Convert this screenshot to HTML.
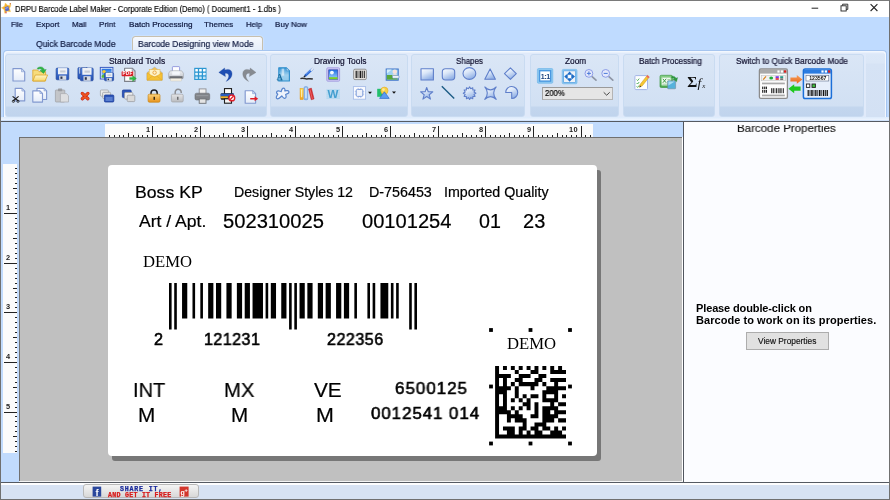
<!DOCTYPE html>
<html lang="en"><head><meta charset="utf-8"><title>DRPU Barcode Label Maker</title>
<style>
*{box-sizing:border-box;margin:0;padding:0}
html,body{width:890px;height:500px;overflow:hidden}
body{position:relative;background:#bfdbff;font-family:"Liberation Sans",sans-serif;color:#000}
.a{position:absolute}
.t{position:absolute;white-space:nowrap;display:block;transform-origin:0 0;will-change:transform}
#titlebar{left:0;top:0;width:890px;height:17px;background:#fff}
#bt{left:0;top:0;width:890px;height:1px;background:#7a7a7a}
#bl{left:0;top:0;width:1.1px;height:500px;background:#707070}
#br{left:888.8px;top:0;width:1.2px;height:500px;background:#707070}
#bb{left:0;top:498.7px;width:890px;height:1.3px;background:#707070}
#menubar{left:1px;top:17px;width:888px;height:34px;background:#bfdbff}
#tabact{left:132px;top:35.6px;width:131.4px;height:16px;background:linear-gradient(#f6f9fe,#e3ecf9);border:1px solid #c8c0ae;border-bottom:none;border-radius:3.5px 3.5px 0 0;box-shadow:0 0 1.5px rgba(255,255,255,.9)}
#ribbon{left:3px;top:50px;width:884px;height:70px;background:#e0eafa;border:1px solid #a6c5ef;border-radius:4px 4px 0 0;border-bottom:none;box-shadow:inset 0 0 0 1.5px #f2f7fe}
.grp{position:absolute;top:54px;height:63px;background:linear-gradient(#dae6f6 0,#d1e0f3 51px,#c3d6ee 52px,#c0d4ed 100%);border:1px solid #c9dbf1;border-radius:3px}
#rline{left:1px;top:121px;width:888px;height:1px;background:#555a62}
#rhi{left:1px;top:117px;width:888px;height:3px;background:linear-gradient(#dcebfc,#edf4fe)}
#rlo{left:1px;top:120px;width:888px;height:1px;background:#cfe2fb}
#work{left:1px;top:122px;width:682px;height:360px;background:#c1dbfd}
#canvas{left:19px;top:137px;width:663px;height:343.5px;background:#c0c0c0;border-top:1px solid #707070;border-left:1px solid #707070}
#hr{left:105px;top:124px;width:488px;height:13px;background:#fbfbfb}
#vr{left:3px;top:164px;width:14px;height:289px;background:#fbfbfb}
#shadow{left:112px;top:170px;width:489px;height:290.5px;background:#777;border-radius:3px}
#label{left:108px;top:165px;width:489px;height:291px;background:#fff;border-radius:4px}
#rpanel{left:683px;top:122px;width:206px;height:360px;background:#fbfcff;border-left:1.3px solid #50555e}
#rsep{left:682px;top:137px;width:1px;height:345px;background:#fff}
#sline{left:1px;top:483px;width:888px;height:2px;background:#fdfdfe}
#sline2{left:1px;top:481.9px;width:888px;height:1.3px;background:#555a62}
#cwl{left:19px;top:480.5px;width:664px;height:1.5px;background:#f4f4f4}
#status{left:1px;top:485px;width:888px;height:14px;background:#d7e2f3}
#vbtn{left:746px;top:332px;width:83px;height:18px;background:#e1e1e1;border:1px solid #adadad}
#share{left:83px;top:484px;width:116px;height:14px;background:linear-gradient(#f4f4f4,#d8d8d8);border:1px solid #b8b8b8;border-radius:3px}
#zsel{left:542px;top:87px;width:71px;height:13px;background:#e5e5e5;border:1px solid #b4b4b4;border-top-color:#9a9a9a;border-left-color:#a4a4a4}

#rfill{left:866px;top:54px;width:19px;height:63px;background:linear-gradient(#dce8f8 0,#dbe7f7 9px,#d6e3f5 10px,#d3e1f4 100%)}

</style></head>
<body>
<div class="a" id="titlebar"></div>
<div class="a" id="menubar"></div>
<div class="a" id="tabact"></div>
<div class="a" id="ribbon"></div>
<div class="grp" style="left:5px;width:262px"></div>
<div class="grp" style="left:270px;width:138px"></div>
<div class="grp" style="left:411px;width:114px"></div>
<div class="grp" style="left:530px;width:89px"></div>
<div class="grp" style="left:623px;width:92px"></div>
<div class="grp" style="left:719px;width:145px"></div>
<div class="a" id="rfill"></div>
<div class="a" id="zsel"></div>
<div class="a" id="rhi"></div>
<div class="a" id="rlo"></div>
<div class="a" id="rline"></div>
<div class="a" id="work"></div>
<div class="a" id="hr"></div>
<div class="a" id="vr"></div>
<div class="a" id="canvas"></div>
<div class="a" id="shadow"></div>
<div class="a" id="label"></div>
<div class="a" id="rsep"></div>
<div class="a" id="rpanel"></div>
<div class="a" id="vbtn"></div>
<div class="a" id="cwl"></div>
<div class="a" id="sline"></div>
<div class="a" id="sline2"></div>
<div class="a" id="status"></div>
<div class="a" id="share"></div>
<div class="a" id="bt"></div>
<div class="a" id="bl"></div>
<div class="a" id="br"></div>
<div class="a" id="bb"></div>

<svg class="a" style="left:0;top:0" width="890" height="500" viewBox="0 0 890 500">
<g stroke="#222" stroke-width="1" shape-rendering="crispEdges">
<line x1="109.64" y1="134.5" x2="109.64" y2="137" stroke-width="1"/>
<line x1="114.40" y1="134.5" x2="114.40" y2="137" stroke-width="1"/>
<line x1="119.17" y1="134.5" x2="119.17" y2="137" stroke-width="1"/>
<line x1="123.93" y1="134.5" x2="123.93" y2="137" stroke-width="1"/>
<line x1="128.69" y1="133" x2="128.69" y2="137" stroke-width="1"/>
<line x1="133.45" y1="134.5" x2="133.45" y2="137" stroke-width="1"/>
<line x1="138.21" y1="134.5" x2="138.21" y2="137" stroke-width="1"/>
<line x1="142.98" y1="134.5" x2="142.98" y2="137" stroke-width="1"/>
<line x1="147.74" y1="134.5" x2="147.74" y2="137" stroke-width="1"/>
<line x1="152.50" y1="126" x2="152.50" y2="137" stroke-width="1"/>
<line x1="157.26" y1="134.5" x2="157.26" y2="137" stroke-width="1"/>
<line x1="162.02" y1="134.5" x2="162.02" y2="137" stroke-width="1"/>
<line x1="166.79" y1="134.5" x2="166.79" y2="137" stroke-width="1"/>
<line x1="171.55" y1="134.5" x2="171.55" y2="137" stroke-width="1"/>
<line x1="176.31" y1="133" x2="176.31" y2="137" stroke-width="1"/>
<line x1="181.07" y1="134.5" x2="181.07" y2="137" stroke-width="1"/>
<line x1="185.83" y1="134.5" x2="185.83" y2="137" stroke-width="1"/>
<line x1="190.60" y1="134.5" x2="190.60" y2="137" stroke-width="1"/>
<line x1="195.36" y1="134.5" x2="195.36" y2="137" stroke-width="1"/>
<line x1="200.12" y1="126" x2="200.12" y2="137" stroke-width="1"/>
<line x1="204.88" y1="134.5" x2="204.88" y2="137" stroke-width="1"/>
<line x1="209.64" y1="134.5" x2="209.64" y2="137" stroke-width="1"/>
<line x1="214.41" y1="134.5" x2="214.41" y2="137" stroke-width="1"/>
<line x1="219.17" y1="134.5" x2="219.17" y2="137" stroke-width="1"/>
<line x1="223.93" y1="133" x2="223.93" y2="137" stroke-width="1"/>
<line x1="228.69" y1="134.5" x2="228.69" y2="137" stroke-width="1"/>
<line x1="233.45" y1="134.5" x2="233.45" y2="137" stroke-width="1"/>
<line x1="238.22" y1="134.5" x2="238.22" y2="137" stroke-width="1"/>
<line x1="242.98" y1="134.5" x2="242.98" y2="137" stroke-width="1"/>
<line x1="247.74" y1="126" x2="247.74" y2="137" stroke-width="1"/>
<line x1="252.50" y1="134.5" x2="252.50" y2="137" stroke-width="1"/>
<line x1="257.26" y1="134.5" x2="257.26" y2="137" stroke-width="1"/>
<line x1="262.03" y1="134.5" x2="262.03" y2="137" stroke-width="1"/>
<line x1="266.79" y1="134.5" x2="266.79" y2="137" stroke-width="1"/>
<line x1="271.55" y1="133" x2="271.55" y2="137" stroke-width="1"/>
<line x1="276.31" y1="134.5" x2="276.31" y2="137" stroke-width="1"/>
<line x1="281.07" y1="134.5" x2="281.07" y2="137" stroke-width="1"/>
<line x1="285.84" y1="134.5" x2="285.84" y2="137" stroke-width="1"/>
<line x1="290.60" y1="134.5" x2="290.60" y2="137" stroke-width="1"/>
<line x1="295.36" y1="126" x2="295.36" y2="137" stroke-width="1"/>
<line x1="300.12" y1="134.5" x2="300.12" y2="137" stroke-width="1"/>
<line x1="304.88" y1="134.5" x2="304.88" y2="137" stroke-width="1"/>
<line x1="309.65" y1="134.5" x2="309.65" y2="137" stroke-width="1"/>
<line x1="314.41" y1="134.5" x2="314.41" y2="137" stroke-width="1"/>
<line x1="319.17" y1="133" x2="319.17" y2="137" stroke-width="1"/>
<line x1="323.93" y1="134.5" x2="323.93" y2="137" stroke-width="1"/>
<line x1="328.69" y1="134.5" x2="328.69" y2="137" stroke-width="1"/>
<line x1="333.46" y1="134.5" x2="333.46" y2="137" stroke-width="1"/>
<line x1="338.22" y1="134.5" x2="338.22" y2="137" stroke-width="1"/>
<line x1="342.98" y1="126" x2="342.98" y2="137" stroke-width="1"/>
<line x1="347.74" y1="134.5" x2="347.74" y2="137" stroke-width="1"/>
<line x1="352.50" y1="134.5" x2="352.50" y2="137" stroke-width="1"/>
<line x1="357.27" y1="134.5" x2="357.27" y2="137" stroke-width="1"/>
<line x1="362.03" y1="134.5" x2="362.03" y2="137" stroke-width="1"/>
<line x1="366.79" y1="133" x2="366.79" y2="137" stroke-width="1"/>
<line x1="371.55" y1="134.5" x2="371.55" y2="137" stroke-width="1"/>
<line x1="376.31" y1="134.5" x2="376.31" y2="137" stroke-width="1"/>
<line x1="381.08" y1="134.5" x2="381.08" y2="137" stroke-width="1"/>
<line x1="385.84" y1="134.5" x2="385.84" y2="137" stroke-width="1"/>
<line x1="390.60" y1="126" x2="390.60" y2="137" stroke-width="1"/>
<line x1="395.36" y1="134.5" x2="395.36" y2="137" stroke-width="1"/>
<line x1="400.12" y1="134.5" x2="400.12" y2="137" stroke-width="1"/>
<line x1="404.89" y1="134.5" x2="404.89" y2="137" stroke-width="1"/>
<line x1="409.65" y1="134.5" x2="409.65" y2="137" stroke-width="1"/>
<line x1="414.41" y1="133" x2="414.41" y2="137" stroke-width="1"/>
<line x1="419.17" y1="134.5" x2="419.17" y2="137" stroke-width="1"/>
<line x1="423.93" y1="134.5" x2="423.93" y2="137" stroke-width="1"/>
<line x1="428.70" y1="134.5" x2="428.70" y2="137" stroke-width="1"/>
<line x1="433.46" y1="134.5" x2="433.46" y2="137" stroke-width="1"/>
<line x1="438.22" y1="126" x2="438.22" y2="137" stroke-width="1"/>
<line x1="442.98" y1="134.5" x2="442.98" y2="137" stroke-width="1"/>
<line x1="447.74" y1="134.5" x2="447.74" y2="137" stroke-width="1"/>
<line x1="452.51" y1="134.5" x2="452.51" y2="137" stroke-width="1"/>
<line x1="457.27" y1="134.5" x2="457.27" y2="137" stroke-width="1"/>
<line x1="462.03" y1="133" x2="462.03" y2="137" stroke-width="1"/>
<line x1="466.79" y1="134.5" x2="466.79" y2="137" stroke-width="1"/>
<line x1="471.55" y1="134.5" x2="471.55" y2="137" stroke-width="1"/>
<line x1="476.32" y1="134.5" x2="476.32" y2="137" stroke-width="1"/>
<line x1="481.08" y1="134.5" x2="481.08" y2="137" stroke-width="1"/>
<line x1="485.84" y1="126" x2="485.84" y2="137" stroke-width="1"/>
<line x1="490.60" y1="134.5" x2="490.60" y2="137" stroke-width="1"/>
<line x1="495.36" y1="134.5" x2="495.36" y2="137" stroke-width="1"/>
<line x1="500.13" y1="134.5" x2="500.13" y2="137" stroke-width="1"/>
<line x1="504.89" y1="134.5" x2="504.89" y2="137" stroke-width="1"/>
<line x1="509.65" y1="133" x2="509.65" y2="137" stroke-width="1"/>
<line x1="514.41" y1="134.5" x2="514.41" y2="137" stroke-width="1"/>
<line x1="519.17" y1="134.5" x2="519.17" y2="137" stroke-width="1"/>
<line x1="523.94" y1="134.5" x2="523.94" y2="137" stroke-width="1"/>
<line x1="528.70" y1="134.5" x2="528.70" y2="137" stroke-width="1"/>
<line x1="533.46" y1="126" x2="533.46" y2="137" stroke-width="1"/>
<line x1="538.22" y1="134.5" x2="538.22" y2="137" stroke-width="1"/>
<line x1="542.98" y1="134.5" x2="542.98" y2="137" stroke-width="1"/>
<line x1="547.75" y1="134.5" x2="547.75" y2="137" stroke-width="1"/>
<line x1="552.51" y1="134.5" x2="552.51" y2="137" stroke-width="1"/>
<line x1="557.27" y1="133" x2="557.27" y2="137" stroke-width="1"/>
<line x1="562.03" y1="134.5" x2="562.03" y2="137" stroke-width="1"/>
<line x1="566.79" y1="134.5" x2="566.79" y2="137" stroke-width="1"/>
<line x1="571.56" y1="134.5" x2="571.56" y2="137" stroke-width="1"/>
<line x1="576.32" y1="134.5" x2="576.32" y2="137" stroke-width="1"/>
<line x1="581.08" y1="126" x2="581.08" y2="137" stroke-width="1"/>
<line x1="585.84" y1="134.5" x2="585.84" y2="137" stroke-width="1"/>
<line x1="590.60" y1="134.5" x2="590.60" y2="137" stroke-width="1"/>
<line x1="14.5" y1="168.96" x2="17" y2="168.96" stroke-width="1"/>
<line x1="14.5" y1="173.92" x2="17" y2="173.92" stroke-width="1"/>
<line x1="14.5" y1="178.88" x2="17" y2="178.88" stroke-width="1"/>
<line x1="14.5" y1="183.84" x2="17" y2="183.84" stroke-width="1"/>
<line x1="13" y1="188.80" x2="17" y2="188.80" stroke-width="1"/>
<line x1="14.5" y1="193.76" x2="17" y2="193.76" stroke-width="1"/>
<line x1="14.5" y1="198.72" x2="17" y2="198.72" stroke-width="1"/>
<line x1="14.5" y1="203.68" x2="17" y2="203.68" stroke-width="1"/>
<line x1="14.5" y1="208.64" x2="17" y2="208.64" stroke-width="1"/>
<line x1="4" y1="213.60" x2="17" y2="213.60" stroke-width="1"/>
<line x1="14.5" y1="218.56" x2="17" y2="218.56" stroke-width="1"/>
<line x1="14.5" y1="223.52" x2="17" y2="223.52" stroke-width="1"/>
<line x1="14.5" y1="228.48" x2="17" y2="228.48" stroke-width="1"/>
<line x1="14.5" y1="233.44" x2="17" y2="233.44" stroke-width="1"/>
<line x1="13" y1="238.40" x2="17" y2="238.40" stroke-width="1"/>
<line x1="14.5" y1="243.36" x2="17" y2="243.36" stroke-width="1"/>
<line x1="14.5" y1="248.32" x2="17" y2="248.32" stroke-width="1"/>
<line x1="14.5" y1="253.28" x2="17" y2="253.28" stroke-width="1"/>
<line x1="14.5" y1="258.24" x2="17" y2="258.24" stroke-width="1"/>
<line x1="4" y1="263.20" x2="17" y2="263.20" stroke-width="1"/>
<line x1="14.5" y1="268.16" x2="17" y2="268.16" stroke-width="1"/>
<line x1="14.5" y1="273.12" x2="17" y2="273.12" stroke-width="1"/>
<line x1="14.5" y1="278.08" x2="17" y2="278.08" stroke-width="1"/>
<line x1="14.5" y1="283.04" x2="17" y2="283.04" stroke-width="1"/>
<line x1="13" y1="288.00" x2="17" y2="288.00" stroke-width="1"/>
<line x1="14.5" y1="292.96" x2="17" y2="292.96" stroke-width="1"/>
<line x1="14.5" y1="297.92" x2="17" y2="297.92" stroke-width="1"/>
<line x1="14.5" y1="302.88" x2="17" y2="302.88" stroke-width="1"/>
<line x1="14.5" y1="307.84" x2="17" y2="307.84" stroke-width="1"/>
<line x1="4" y1="312.80" x2="17" y2="312.80" stroke-width="1"/>
<line x1="14.5" y1="317.76" x2="17" y2="317.76" stroke-width="1"/>
<line x1="14.5" y1="322.72" x2="17" y2="322.72" stroke-width="1"/>
<line x1="14.5" y1="327.68" x2="17" y2="327.68" stroke-width="1"/>
<line x1="14.5" y1="332.64" x2="17" y2="332.64" stroke-width="1"/>
<line x1="13" y1="337.60" x2="17" y2="337.60" stroke-width="1"/>
<line x1="14.5" y1="342.56" x2="17" y2="342.56" stroke-width="1"/>
<line x1="14.5" y1="347.52" x2="17" y2="347.52" stroke-width="1"/>
<line x1="14.5" y1="352.48" x2="17" y2="352.48" stroke-width="1"/>
<line x1="14.5" y1="357.44" x2="17" y2="357.44" stroke-width="1"/>
<line x1="4" y1="362.40" x2="17" y2="362.40" stroke-width="1"/>
<line x1="14.5" y1="367.36" x2="17" y2="367.36" stroke-width="1"/>
<line x1="14.5" y1="372.32" x2="17" y2="372.32" stroke-width="1"/>
<line x1="14.5" y1="377.28" x2="17" y2="377.28" stroke-width="1"/>
<line x1="14.5" y1="382.24" x2="17" y2="382.24" stroke-width="1"/>
<line x1="13" y1="387.20" x2="17" y2="387.20" stroke-width="1"/>
<line x1="14.5" y1="392.16" x2="17" y2="392.16" stroke-width="1"/>
<line x1="14.5" y1="397.12" x2="17" y2="397.12" stroke-width="1"/>
<line x1="14.5" y1="402.08" x2="17" y2="402.08" stroke-width="1"/>
<line x1="14.5" y1="407.04" x2="17" y2="407.04" stroke-width="1"/>
<line x1="4" y1="412.00" x2="17" y2="412.00" stroke-width="1"/>
<line x1="14.5" y1="416.96" x2="17" y2="416.96" stroke-width="1"/>
<line x1="14.5" y1="421.92" x2="17" y2="421.92" stroke-width="1"/>
<line x1="14.5" y1="426.88" x2="17" y2="426.88" stroke-width="1"/>
<line x1="14.5" y1="431.84" x2="17" y2="431.84" stroke-width="1"/>
<line x1="13" y1="436.80" x2="17" y2="436.80" stroke-width="1"/>
<line x1="14.5" y1="441.76" x2="17" y2="441.76" stroke-width="1"/>
<line x1="14.5" y1="446.72" x2="17" y2="446.72" stroke-width="1"/>
<line x1="14.5" y1="451.68" x2="17" y2="451.68" stroke-width="1"/>
</g>
<g fill="#000">
<rect x="169.00" y="283" width="2.61" height="46.5"/>
<rect x="174.22" y="283" width="2.61" height="46.5"/>
<rect x="182.05" y="283" width="5.22" height="35.5"/>
<rect x="192.49" y="283" width="2.61" height="35.5"/>
<rect x="200.33" y="283" width="2.61" height="35.5"/>
<rect x="208.16" y="283" width="5.22" height="35.5"/>
<rect x="215.99" y="283" width="5.22" height="35.5"/>
<rect x="226.43" y="283" width="5.22" height="35.5"/>
<rect x="236.87" y="283" width="5.22" height="35.5"/>
<rect x="244.71" y="283" width="5.22" height="35.5"/>
<rect x="252.54" y="283" width="10.44" height="35.5"/>
<rect x="265.59" y="283" width="2.61" height="35.5"/>
<rect x="270.81" y="283" width="5.22" height="35.5"/>
<rect x="281.25" y="283" width="5.22" height="35.5"/>
<rect x="289.08" y="283" width="2.61" height="46.5"/>
<rect x="294.31" y="283" width="2.61" height="46.5"/>
<rect x="299.53" y="283" width="5.22" height="35.5"/>
<rect x="307.36" y="283" width="5.22" height="35.5"/>
<rect x="317.80" y="283" width="5.22" height="35.5"/>
<rect x="325.63" y="283" width="5.22" height="35.5"/>
<rect x="336.07" y="283" width="5.22" height="35.5"/>
<rect x="343.91" y="283" width="5.22" height="35.5"/>
<rect x="354.35" y="283" width="2.61" height="35.5"/>
<rect x="367.40" y="283" width="2.61" height="35.5"/>
<rect x="372.62" y="283" width="2.61" height="35.5"/>
<rect x="380.45" y="283" width="7.83" height="35.5"/>
<rect x="390.89" y="283" width="2.61" height="35.5"/>
<rect x="396.12" y="283" width="2.61" height="35.5"/>
<rect x="409.17" y="283" width="2.61" height="46.5"/>
<rect x="414.39" y="283" width="2.61" height="46.5"/>
</g>
<path fill="#000" d="M495.10,366.00h3.94v4.03h-3.94zM502.98,366.00h3.94v4.03h-3.94zM510.86,366.00h3.94v4.03h-3.94zM518.73,366.00h3.94v4.03h-3.94zM526.61,366.00h3.94v4.03h-3.94zM534.49,366.00h3.94v4.03h-3.94zM542.37,366.00h3.94v4.03h-3.94zM550.24,366.00h3.94v4.03h-3.94zM558.12,366.00h3.94v4.03h-3.94zM495.10,370.03h3.94v4.03h-3.94zM514.79,370.03h3.94v4.03h-3.94zM530.55,370.03h7.88v4.03h-7.88zM550.24,370.03h15.76v4.03h-15.76zM495.10,374.06h15.76v4.03h-15.76zM518.73,374.06h11.82v4.03h-11.82zM538.43,374.06h7.88v4.03h-7.88zM495.10,378.08h3.94v4.03h-3.94zM502.98,378.08h3.94v4.03h-3.94zM514.79,378.08h7.88v4.03h-7.88zM534.49,378.08h7.88v4.03h-7.88zM550.24,378.08h15.76v4.03h-15.76zM495.10,382.11h3.94v4.03h-3.94zM502.98,382.11h3.94v4.03h-3.94zM510.86,382.11h3.94v4.03h-3.94zM518.73,382.11h19.69v4.03h-19.69zM542.37,382.11h3.94v4.03h-3.94zM554.18,382.11h3.94v4.03h-3.94zM495.10,386.14h15.76v4.03h-15.76zM514.79,386.14h3.94v4.03h-3.94zM530.55,386.14h3.94v4.03h-3.94zM546.31,386.14h19.69v4.03h-19.69zM495.10,390.17h11.82v4.03h-11.82zM514.79,390.17h3.94v4.03h-3.94zM542.37,390.17h15.76v4.03h-15.76zM495.10,394.19h3.94v4.03h-3.94zM502.98,394.19h3.94v4.03h-3.94zM514.79,394.19h3.94v4.03h-3.94zM522.67,394.19h3.94v4.03h-3.94zM530.55,394.19h7.88v4.03h-7.88zM542.37,394.19h3.94v4.03h-3.94zM554.18,394.19h3.94v4.03h-3.94zM562.06,394.19h3.94v4.03h-3.94zM495.10,398.22h3.94v4.03h-3.94zM502.98,398.22h3.94v4.03h-3.94zM510.86,398.22h3.94v4.03h-3.94zM518.73,398.22h3.94v4.03h-3.94zM526.61,398.22h3.94v4.03h-3.94zM542.37,398.22h15.76v4.03h-15.76zM495.10,402.25h3.94v4.03h-3.94zM502.98,402.25h3.94v4.03h-3.94zM522.67,402.25h7.88v4.03h-7.88zM534.49,402.25h3.94v4.03h-3.94zM550.24,402.25h3.94v4.03h-3.94zM558.12,402.25h7.88v4.03h-7.88zM495.10,406.28h11.82v4.03h-11.82zM510.86,406.28h3.94v4.03h-3.94zM518.73,406.28h3.94v4.03h-3.94zM526.61,406.28h3.94v4.03h-3.94zM534.49,406.28h3.94v4.03h-3.94zM542.37,406.28h15.76v4.03h-15.76zM495.10,410.31h15.76v4.03h-15.76zM514.79,410.31h3.94v4.03h-3.94zM534.49,410.31h3.94v4.03h-3.94zM542.37,410.31h7.88v4.03h-7.88zM554.18,410.31h11.82v4.03h-11.82zM495.10,414.33h3.94v4.03h-3.94zM506.92,414.33h15.76v4.03h-15.76zM530.55,414.33h7.88v4.03h-7.88zM542.37,414.33h15.76v4.03h-15.76zM495.10,418.36h3.94v4.03h-3.94zM506.92,418.36h3.94v4.03h-3.94zM514.79,418.36h11.82v4.03h-11.82zM542.37,418.36h11.82v4.03h-11.82zM558.12,418.36h7.88v4.03h-7.88zM495.10,422.39h3.94v4.03h-3.94zM522.67,422.39h3.94v4.03h-3.94zM534.49,422.39h11.82v4.03h-11.82zM495.10,426.42h3.94v4.03h-3.94zM502.98,426.42h11.82v4.03h-11.82zM518.73,426.42h7.88v4.03h-7.88zM530.55,426.42h7.88v4.03h-7.88zM542.37,426.42h7.88v4.03h-7.88zM554.18,426.42h3.94v4.03h-3.94zM562.06,426.42h3.94v4.03h-3.94zM495.10,430.44h3.94v4.03h-3.94zM506.92,430.44h7.88v4.03h-7.88zM518.73,430.44h3.94v4.03h-3.94zM526.61,430.44h3.94v4.03h-3.94zM534.49,430.44h7.88v4.03h-7.88zM550.24,430.44h11.82v4.03h-11.82zM495.10,434.47h70.90v4.03h-70.90z"/>
<g fill="#000">
<rect x="489.1" y="328.1" width="3.8" height="3.8"/>
<rect x="528.6" y="328.1" width="3.8" height="3.8"/>
<rect x="568.1" y="328.1" width="3.8" height="3.8"/>
<rect x="489.1" y="384.6" width="3.8" height="3.8"/>
<rect x="568.1" y="384.6" width="3.8" height="3.8"/>
<rect x="489.1" y="441.6" width="3.8" height="3.8"/>
<rect x="528.6" y="441.6" width="3.8" height="3.8"/>
<rect x="568.1" y="441.6" width="3.8" height="3.8"/>
</g>
</svg>
<svg class="a" style="left:0;top:0;will-change:transform" width="890" height="500" viewBox="0 0 890 500"><defs>
<linearGradient id="gpg" x1="0" y1="0" x2="0" y2="1"><stop offset="0" stop-color="#ffffff"/><stop offset="1" stop-color="#e4ecf9"/></linearGradient>
<linearGradient id="gsh" x1="0" y1="0" x2="0.5" y2="1"><stop offset="0" stop-color="#fbfdff"/><stop offset="0.45" stop-color="#dbe7f8"/><stop offset="1" stop-color="#93b2e6"/></linearGradient>
<linearGradient id="gfl" x1="0" y1="0" x2="0" y2="1"><stop offset="0" stop-color="#4f80d8"/><stop offset="1" stop-color="#2450b4"/></linearGradient>
<linearGradient id="gfo" x1="0" y1="0" x2="0" y2="1"><stop offset="0" stop-color="#fef6cc"/><stop offset="1" stop-color="#f8d76a"/></linearGradient>
<linearGradient id="gsky" x1="0" y1="0" x2="0" y2="1"><stop offset="0" stop-color="#1f6fe0"/><stop offset="1" stop-color="#a8d6ff"/></linearGradient>
<linearGradient id="glk" x1="0" y1="0" x2="0" y2="1"><stop offset="0" stop-color="#fbd27a"/><stop offset="1" stop-color="#e8921a"/></linearGradient>
<linearGradient id="ggr" x1="0" y1="0" x2="0" y2="1"><stop offset="0" stop-color="#e4e5e7"/><stop offset="1" stop-color="#b9bbbf"/></linearGradient>
<linearGradient id="gtx" x1="0" y1="0" x2="0" y2="1"><stop offset="0" stop-color="#3a98d8"/><stop offset="0.55" stop-color="#9fd0ee"/><stop offset="1" stop-color="#8fc8ea"/></linearGradient>
<linearGradient id="gor" x1="0" y1="0" x2="0" y2="1"><stop offset="0" stop-color="#f7a05a"/><stop offset="1" stop-color="#e8641a"/></linearGradient>
<linearGradient id="gzb" x1="0" y1="0" x2="0" y2="1"><stop offset="0" stop-color="#5aa4e4"/><stop offset="1" stop-color="#2a72c4"/></linearGradient>
<linearGradient id="gpr" x1="0" y1="0" x2="0" y2="1"><stop offset="0" stop-color="#eef0f3"/><stop offset="1" stop-color="#bfc2c8"/></linearGradient>
<linearGradient id="gxl" x1="0" y1="0" x2="0" y2="1"><stop offset="0" stop-color="#8ad088"/><stop offset="1" stop-color="#47a64a"/></linearGradient>
<linearGradient id="gbk" x1="0" y1="0" x2="0" y2="1"><stop offset="0" stop-color="#fadc48"/><stop offset="1" stop-color="#f0a020"/></linearGradient>
</defs><path d="M13,68.6h8.5l3.2,3.2v9.2h-11.7z" fill="url(#gpg)" stroke="#8299d0" stroke-width="1.15" stroke-linejoin="round"/><path d="M21.5,68.6v3.2h3.2z" fill="#c9d8ef" stroke="#8299d0" stroke-width="0.6"/><path d="M32.8,81V70h4.8l1.4,1.7h6.6V81z" fill="#f7dc7c" stroke="#dba62c" stroke-width="0.8"/><path d="M32.8,81l2.5,-6h12.3l-2.6,6z" fill="url(#gfo)" stroke="#dba62c" stroke-width="0.8"/><path d="M37.2,68.2c2.6,-2.2 6.4,-1.6 7.2,1.6l1.8,-0.3l-2.6,3.9l-3.6,-2.8l1.8,-0.4c-0.6,-1.6 -2.6,-1.8 -3.9,-0.9z" fill="#2fb443" stroke="#1f9432" stroke-width="0.4"/><rect x="56.1" y="68.1" width="12.7" height="11.7" rx="1" fill="url(#gfl)" stroke="#1c3f94" stroke-width="0.6"/><rect x="58.005" y="68.1" width="9.143999999999998" height="6.201" fill="#eef1f6"/><rect x="60.164" y="70.44" width="5.334" height="1.989" fill="#c6ccd6"/><rect x="59.148" y="75.588" width="7.112" height="4.212" fill="#d7dbe2"/><rect x="60.418" y="76.524" width="2.032" height="2.34" fill="#2b3550"/><rect x="77.9" y="67.6" width="9.6" height="11.4" rx="1" fill="url(#gfl)" stroke="#1c3f94" stroke-width="0.6"/><rect x="79.34" y="67.6" width="6.912" height="6.042000000000001" fill="#eef1f6"/><rect x="80.97200000000001" y="69.88" width="4.032" height="1.9380000000000002" fill="#c6ccd6"/><rect x="80.20400000000001" y="74.896" width="5.376" height="4.104" fill="#d7dbe2"/><rect x="81.164" y="75.80799999999999" width="1.536" height="2.2800000000000002" fill="#2b3550"/><rect x="80.4" y="68" width="12.8" height="12.8" rx="1" fill="url(#gfl)" stroke="#1c3f94" stroke-width="0.6"/><rect x="82.32000000000001" y="68" width="9.216" height="6.784000000000001" fill="#eef1f6"/><rect x="84.49600000000001" y="70.56" width="5.376" height="2.176" fill="#c6ccd6"/><rect x="83.47200000000001" y="76.19200000000001" width="7.168000000000001" height="4.608" fill="#d7dbe2"/><rect x="84.75200000000001" y="77.216" width="2.048" height="2.5600000000000005" fill="#2b3550"/><rect x="100.3" y="67.4" width="12.6" height="11.6" fill="#f4f7fd" stroke="#3a5cc0" stroke-width="1"/><rect x="101.6" y="68.7" width="10" height="9" fill="url(#gsky)"/><circle cx="104" cy="71.6" r="1.7" fill="#f8c82a"/><path d="M101.6,77.7v-2l2.4,-1.6l2.4,1.6l2.2,-3.6l2.9,3.4v2.2z" fill="#5ab838"/><rect x="104.5" y="72.8" width="9.1" height="8" rx="1" fill="url(#gfl)" stroke="#1c3f94" stroke-width="0.6"/><rect x="105.865" y="72.8" width="6.552" height="4.24" fill="#eef1f6"/><rect x="107.412" y="74.39999999999999" width="3.8219999999999996" height="1.36" fill="#c6ccd6"/><rect x="106.684" y="77.92" width="5.096" height="2.88" fill="#d7dbe2"/><rect x="107.594" y="78.56" width="1.456" height="1.6" fill="#2b3550"/><path d="M124.6,68.2h7.6000000000000005l2.8,2.8v10.399999999999999h-10.4z" fill="#ffffff" stroke="#7d8089" stroke-width="1.15" stroke-linejoin="round"/><path d="M132.2,68.2v2.8h2.8z" fill="#c9d8ef" stroke="#7d8089" stroke-width="0.6"/><rect x="121.6" y="71.2" width="11.7" height="5.1" rx="0.8" fill="#d8202a"/><text x="122.5" y="75.4" font-family="Liberation Sans, sans-serif" font-size="4.6" font-weight="700" fill="#fff" letter-spacing="0.3">PDF</text><path d="M129.6,77.4h3v-1.9l3.8,3l-3.8,3v-1.9h-3z" fill="#2fb846" stroke="#1d8a2c" stroke-width="0.3"/><path d="M147,72.6l7.6,-5.6l7.6,5.6v7.6h-15.2z" fill="#f3c24a" stroke="#9fb4d8" stroke-width="0.6"/><rect x="149.2" y="69.6" width="10.8" height="7" fill="#fdf3c8" stroke="#e2b24a" stroke-width="0.5"/><circle cx="154.6" cy="72.6" r="1.7" fill="none" stroke="#e8962a" stroke-width="0.8"/><path d="M147,72.9l7.6,4.3l7.6,-4.3v7.3h-15.2z" fill="#f5c236" stroke="#e0a21c" stroke-width="0.5"/><path d="M147.3,80l5.4,-4.2M161.9,80l-5.4,-4.2" stroke="#d9a030" stroke-width="0.5" fill="none"/><rect x="172.4" y="66.6" width="7.2" height="5.4" rx="0.6" fill="#fdfdff" stroke="#8d94da" stroke-width="0.9"/><path d="M170.4,70.8h11.2l1.8,2.4v4.4a1,1 0 0 1 -1,1h-12.8a1,1 0 0 1 -1,-1v-4.4z" fill="url(#gpr)" stroke="#9a9da4" stroke-width="0.6"/><rect x="172.2" y="71.4" width="7.6" height="3.4" fill="#f4f7fb"/><rect x="169.4" y="76.2" width="13.2" height="2.4" fill="#6c6e73"/><rect x="170.8" y="78.6" width="10.4" height="2.4" fill="#f3efe4" stroke="#c9c4b4" stroke-width="0.4"/><rect x="194.2" y="67.8" width="12.3" height="12.2" fill="#2c97d2"/><rect x="195.30" y="68.90" width="2.6" height="2.5" rx="0.5" fill="#ffffff"/><rect x="199.15" y="68.90" width="2.6" height="2.5" rx="0.5" fill="#ffffff"/><rect x="203.00" y="68.90" width="2.6" height="2.5" rx="0.5" fill="#ffffff"/><rect x="195.30" y="72.65" width="2.6" height="2.5" rx="0.5" fill="#e8f6fd"/><rect x="199.15" y="72.65" width="2.6" height="2.5" rx="0.5" fill="#e8f6fd"/><rect x="203.00" y="72.65" width="2.6" height="2.5" rx="0.5" fill="#e8f6fd"/><rect x="195.30" y="76.40" width="2.6" height="2.5" rx="0.5" fill="#bfe3f6"/><rect x="199.15" y="76.40" width="2.6" height="2.5" rx="0.5" fill="#bfe3f6"/><rect x="203.00" y="76.40" width="2.6" height="2.5" rx="0.5" fill="#bfe3f6"/><path d="M218.8,72.4L224.6,68L224.8,70C228.5,68.6 231.8,69.6 232,73.4C232.2,77 229.5,79.6 226.2,81.4C228.6,78.6 229.6,75.6 228,74C227.2,73.2 226,73.2 225,73.6L225.4,76.6Z" fill="#1f4fb4" stroke="#173f94" stroke-width="0.3"/><path d="M256.00,72.40 L250.20,68.00 L250.00,70.00 C246.30,68.60 243.00,69.60 242.80,73.40 C242.60,77.00 245.30,79.60 248.60,81.40 C246.20,78.60 245.20,75.60 246.80,74.00 C247.60,73.20 248.80,73.20 249.80,73.60 L249.40,76.60 Z" fill="#878b91" stroke="#74787f" stroke-width="0.3"/><path d="M15.2,88.3h6.7l2.8,2.8v9.8h-9.5z" fill="url(#gpg)" stroke="#8299d0" stroke-width="1.15" stroke-linejoin="round"/><path d="M21.9,88.3v2.8h2.8z" fill="#c9d8ef" stroke="#8299d0" stroke-width="0.6"/><path d="M12.6,96.4l5.8,4.6M18.6,96.4l-5.6,4.6" stroke="#1a1a1a" stroke-width="1.1"/><circle cx="13.4" cy="101.3" r="1.1" fill="none" stroke="#1a1a1a" stroke-width="0.8"/><circle cx="18" cy="101.3" r="1.1" fill="none" stroke="#1a1a1a" stroke-width="0.8"/><path d="M37,88.3h7.0l2.6,2.6v8.6h-9.6z" fill="url(#gpg)" stroke="#8299d0" stroke-width="1.15" stroke-linejoin="round"/><path d="M44.0,88.3v2.6h2.6z" fill="#c9d8ef" stroke="#8299d0" stroke-width="0.6"/><path d="M32.8,90.9h7.1l2.6,2.6v8.6h-9.7z" fill="url(#gpg)" stroke="#8299d0" stroke-width="1.15" stroke-linejoin="round"/><path d="M39.9,90.9v2.6h2.6z" fill="#c9d8ef" stroke="#8299d0" stroke-width="0.6"/><rect x="55.4" y="90" width="9.4" height="12" rx="0.8" fill="#c3c5c8" stroke="#9c9ea2" stroke-width="0.7"/><rect x="58" y="88.6" width="4.2" height="2.6" rx="0.6" fill="#9a9ca0"/><path d="M60.4,93.6h6l2.1,2.1v6.3h-8.1z" fill="#dedfe1" stroke="#a6a8ac" stroke-width="0.7"/><path d="M82.3,93.4l5.6,5.3M87.9,93.4l-5.6,5.3" stroke="#c8241a" stroke-width="3.3" stroke-linecap="round"/><path d="M82.3,93.4l5.6,5.3M87.9,93.4l-5.6,5.3" stroke="#ec5420" stroke-width="2.1" stroke-linecap="round"/><rect x="100.4" y="90" width="8" height="6.2" rx="1" fill="#ececec" stroke="#a2a4a8" stroke-width="0.8"/><rect x="102.6" y="92.3" width="8" height="6.2" rx="1" fill="#e6e6e6" stroke="#9c9ea2" stroke-width="0.8"/><rect x="104.4" y="95" width="9.4" height="7" rx="1" fill="#2d55b8" stroke="#1f3f9a" stroke-width="0.8"/><rect x="105.6" y="97" width="7" height="4" fill="#5a7fd0"/><rect x="122.4" y="90" width="8.8" height="7.6" rx="1" fill="#2d55b8" stroke="#1f3f9a" stroke-width="0.8"/><rect x="124.6" y="92.5" width="8.2" height="6.6" rx="1" fill="#efefef" stroke="#9c9ea2" stroke-width="0.8"/><rect x="127.2" y="95.2" width="7.6" height="6.4" rx="1" fill="#d9d9d9" stroke="#9a9c9f" stroke-width="0.8"/><path d="M151,95v-2a3.1,3.1 0 0 1 6.2,0V95" fill="none" stroke="#1e1e24" stroke-width="1.5"/><rect x="148.1" y="94.2" width="11.9" height="8" rx="1.3" fill="url(#glk)" stroke="#c98618" stroke-width="0.7"/><rect x="153.5" y="96.8" width="1.5" height="3" fill="#3a2a10"/><path d="M175.2,94.6v-2.2a3,3 0 0 1 6,-0.4v1" fill="none" stroke="#8c8e92" stroke-width="1.5"/><rect x="171.4" y="94.2" width="11.8" height="7.8" rx="1.3" fill="url(#ggr)" stroke="#a2a4a8" stroke-width="0.7"/><rect x="177" y="96.8" width="1.5" height="3" fill="#6b6d70"/><rect x="199.2" y="88.9" width="6.8" height="5.4" fill="#f1f1f1" stroke="#8c8e92" stroke-width="0.9"/><rect x="195" y="93.2" width="14.7" height="6.8" rx="1.6" fill="#808388" stroke="#6c6f74" stroke-width="0.6"/><rect x="196.2" y="95.2" width="12.2" height="1" fill="#9a9da2"/><rect x="199.2" y="98.9" width="6.8" height="4.4" fill="#e4e4e4" stroke="#6c6f74" stroke-width="0.9"/><rect x="224.5" y="88.6" width="7" height="5.6" fill="#fff" stroke="#1e1e1e" stroke-width="1.1"/><rect x="220.7" y="93.3" width="13.2" height="6.4" rx="1.2" fill="#15181e"/><rect x="220.7" y="93.6" width="13.2" height="2.8" fill="#2a5cbc"/><rect x="220.7" y="96.3" width="7.2" height="2" fill="#f0b22e"/><rect x="224.5" y="98.8" width="7" height="4.4" fill="#f4f4f4" stroke="#1e1e1e" stroke-width="1.1"/><circle cx="231.8" cy="97.9" r="2.9" fill="#fff" stroke="#e0202a" stroke-width="1.4"/><path d="M230,99.8l3.6,-3.8" stroke="#e0202a" stroke-width="1.3"/><path d="M245.2,90.7h7.4l3,3v9.6h-10.4z" fill="url(#gpg)" stroke="#8299d0" stroke-width="1.15" stroke-linejoin="round"/><path d="M252.6,90.7v3h3z" fill="#c9d8ef" stroke="#8299d0" stroke-width="0.6"/><path d="M250.2,98h4.4v-1.8l3.6,2.5l-3.6,2.5v-1.8h-4.4z" fill="#e01c28"/><path d="M278.8,67.8h7.6l3,3v10.2h-10.6z" fill="url(#gtx)" stroke="#2f8fcc" stroke-width="1.15" stroke-linejoin="round"/><path d="M286.40000000000003,67.8v3h3z" fill="#c9d8ef" stroke="#2f8fcc" stroke-width="0.6"/><rect x="281.6" y="68.6" width="2.6" height="7" fill="#fff" opacity="0.55"/><text x="276.6" y="79.6" font-family="Liberation Serif, serif" font-size="8.6" font-weight="700" fill="#176a9c">A</text><path d="M277,80.6h6" stroke="#176a9c" stroke-width="0.7" stroke-dasharray="0.8 0.6"/><path d="M312.2,69.2l-6.6,6.2" stroke="#2b6ad8" stroke-width="2.5" stroke-linecap="round"/><path d="M312.6,68.8l-1.2,1.1" stroke="#dfe6f2" stroke-width="2.2" stroke-linecap="round"/><path d="M311,69.6l-5,4.7" stroke="#8fb8f4" stroke-width="0.7"/><path d="M305.4,75.6l-1.6,1.6" stroke="#222" stroke-width="1.2"/><path d="M300.4,78.6c2.6,-1 4.4,0.4 6.4,0.3s3.4,-0.5 6,0.1" stroke="#303030" stroke-width="1.5" fill="none"/><rect x="326.8" y="67.8" width="12.8" height="13.4" rx="1" fill="#cfcaf3" stroke="#a39be0" stroke-width="0.9"/><rect x="328.7" y="69.8" width="9.1" height="9.6" fill="url(#gsky)" stroke="#3a3fa8" stroke-width="0.6"/><circle cx="331.9" cy="72.6" r="1.9" fill="#f2faff"/><rect x="329" y="77.2" width="8.5" height="2" fill="#7ad024"/><rect x="353.6" y="69.2" width="12.8" height="10.4" rx="1.4" fill="#e3e0dc" stroke="#8c8c8c" stroke-width="0.9"/><rect x="355.6" y="70.8" width="1.2" height="7.2" fill="#1a1a1a"/><rect x="357.6" y="70.8" width="0.7" height="7.2" fill="#1a1a1a"/><rect x="359.6" y="70.8" width="1.7" height="7.2" fill="#1a1a1a"/><rect x="362.3" y="70.8" width="0.8" height="7.2" fill="#1a1a1a"/><rect x="363.9" y="70.8" width="0.9" height="7.2" fill="#1a1a1a"/><rect x="386.2" y="69" width="12" height="11.2" fill="#9fd2f2" stroke="#3a70c8" stroke-width="1"/><path d="M386.8,69.6h5l-5,4z" fill="#d8effb"/><rect x="386.8" y="75" width="10.8" height="4.6" fill="#58a83a"/><circle cx="394.8" cy="71.8" r="2.3" fill="#f8e2da"/><path d="M392,75.4c0.6,-1.6 5,-1.6 5.6,0z" fill="#f8e2da"/><rect x="392.4" y="75.6" width="6.6" height="2.6" rx="0.8" fill="#f7f8fc" stroke="#4a78c8" stroke-width="0.5"/><path d="M282.8,88.4c1.6,-0.8 2.6,0.8 2,2.6c1.6,-0.6 4,-0.6 4.2,1c0.2,1.6 -2.4,1.8 -3.4,2.6c0.8,1.6 0.8,3.6 -0.8,3.8c-1.6,0.2 -2,-1.6 -3,-2.4c-1.2,1.2 -3.6,3.6 -5,2.6c-1.4,-1 0.2,-3.2 1,-4.4c-1.2,-0.6 -1.8,-2.2 -0.6,-3c1.2,-0.8 2.8,0.2 4,0.4c0.2,-1.2 0.4,-2.6 1.6,-3.2z" fill="#eef3fc" stroke="#5684cc" stroke-width="1.2" stroke-linejoin="round"/><rect x="300" y="88.3" width="3.3" height="11.4" fill="url(#gbk)" stroke="#e0981a" stroke-width="0.4"/><rect x="301.1" y="89.6" width="1.1" height="7.6" fill="#fdf0b8"/><rect x="304.2" y="86.7" width="3.5" height="13" rx="0.8" fill="#9cc4f0" stroke="#5a8ed8" stroke-width="0.6"/><rect x="305.4" y="88" width="1.1" height="10" fill="#e4f0fc"/><path d="M308.5,89l2.9,-0.9l2.7,10.8l-2.9,0.9z" fill="#d92c30" stroke="#a81a22" stroke-width="0.4"/><path d="M310,89.6l2.4,9.6" stroke="#f08a8a" stroke-width="0.6"/><rect x="326.4" y="89.6" width="13.6" height="0.9" fill="#9fd2ee"/><rect x="326.4" y="91.6" width="13.6" height="0.9" fill="#9fd2ee"/><rect x="326.4" y="93.6" width="13.6" height="0.9" fill="#9fd2ee"/><rect x="326.4" y="95.6" width="13.6" height="0.9" fill="#9fd2ee"/><rect x="326.4" y="97.6" width="13.6" height="0.9" fill="#9fd2ee"/><text x="327.6" y="98.4" font-family="Liberation Sans, sans-serif" font-size="11.5" font-weight="700" fill="#439fd0">W</text><rect x="353.4" y="86.6" width="12.2" height="12.6" fill="#fbfcff" stroke="#a6bde8" stroke-width="0.9"/><rect x="356.2" y="89.4" width="6.6" height="7" rx="1.2" fill="#eef2fb" stroke="#7b9ad8" stroke-width="1"/><path d="M358.2,88v1.6M360.8,88v1.6M358.2,96.4v1.6M360.8,96.4v1.6M354.8,91.6h1.6M354.8,94.2h1.6M362.6,91.6h1.6M362.6,94.2h1.6" stroke="#9ab2e2" stroke-width="0.7"/><path d="M368,91.7l2,2.3l2,-2.3z" fill="#111"/><rect x="377.2" y="88.8" width="5.2" height="8" fill="#22bf6c"/><circle cx="384.4" cy="90.7" r="3.6" fill="#f8d246" stroke="#e0a828" stroke-width="0.6"/><circle cx="383.4" cy="89.6" r="1.4" fill="#fdf0b0" opacity="0.8"/><path d="M379.6,98.4l4.8,-6.6l4.8,6.6z" fill="#5c9cf0" stroke="#2a6ac8" stroke-width="0.7" stroke-linejoin="round"/><path d="M392,91.5l2,2.3l2,-2.3z" fill="#111"/><rect x="421" y="68.7" width="12.4" height="11.3" fill="url(#gsh)" stroke="#5f7fca" stroke-width="1.1" stroke-linejoin="round"/><rect x="442.3" y="68.7" width="12.4" height="11.3" rx="3.2" fill="url(#gsh)" stroke="#5f7fca" stroke-width="1.1" stroke-linejoin="round"/><ellipse cx="469.4" cy="73.5" rx="6.4" ry="5.9" fill="url(#gsh)" stroke="#5f7fca" stroke-width="1.1" stroke-linejoin="round"/><path d="M490.1,68.9l5.3,10.4h-10.6z" fill="url(#gsh)" stroke="#5f7fca" stroke-width="1.1" stroke-linejoin="round"/><path d="M510.4,67.9l5.9,5.7l-5.9,5.7l-5.9,-5.7z" fill="url(#gsh)" stroke="#5f7fca" stroke-width="1.1" stroke-linejoin="round"/><polygon points="426.70,87.50 428.23,91.80 432.79,91.92 429.17,94.70 430.46,99.08 426.70,96.50 422.94,99.08 424.23,94.70 420.61,91.92 425.17,91.80" fill="url(#gsh)" stroke="#5f7fca" stroke-width="1.1" stroke-linejoin="round"/><path d="M441.8,86.2l12.4,12.2" stroke="#1c5c84" stroke-width="1.4"/><polygon points="469.60,86.90 470.79,88.76 472.75,87.74 472.85,89.95 475.06,90.05 474.04,92.01 475.90,93.20 474.04,94.39 475.06,96.35 472.85,96.45 472.75,98.66 470.79,97.64 469.60,99.50 468.41,97.64 466.45,98.66 466.35,96.45 464.14,96.35 465.16,94.39 463.30,93.20 465.16,92.01 464.14,90.05 466.35,89.95 466.45,87.74 468.41,88.76" fill="url(#gsh)" stroke="#5f7fca" stroke-width="1.1" stroke-linejoin="round"/><path d="M484.8,87.0Q490.5,92.60000000000001 496.2,87.0Q491.1,93.2 496.2,99.4Q490.5,93.8 484.8,99.4Q489.9,93.2 484.8,87.0z" fill="url(#gsh)" stroke="#5f7fca" stroke-width="1.1" stroke-linejoin="round"/><path d="M505.7,92.5A6,6 0 1 1 511.7,98.5V92.5z" fill="url(#gsh)" stroke="#5f7fca" stroke-width="1.1" stroke-linejoin="round"/><rect x="537.4" y="68.5" width="15.4" height="14.8" rx="1.2" fill="#8cc8f0" stroke="#6ab4ea" stroke-width="0.6"/><rect x="538.9" y="70" width="12.4" height="11.8" fill="#4a98e0"/><rect x="540.3" y="71.4" width="9.6" height="9" fill="#ffffff"/><text x="540.7" y="79" font-family="Liberation Sans, sans-serif" font-size="7" font-weight="700" fill="#173f7c" letter-spacing="-0.3">1:1</text><rect x="562.2" y="69.4" width="14.8" height="14.4" rx="1.2" fill="#8cc8f0" stroke="#6ab4ea" stroke-width="0.6"/><rect x="563.7" y="70.9" width="11.8" height="11.4" fill="#eef2f7" stroke="#4a98e0" stroke-width="0.6"/><path d="M569.6,71.39999999999999l2.7,3h-5.4zM569.6,81.8l2.7,-3h-5.4zM564.2,76.6l3,-2.7v5.4zM575.0,76.6l-3,-2.7v5.4z" fill="#1d6cc6"/><rect x="567.7" y="74.69999999999999" width="3.8" height="3.8" fill="#fff" stroke="#1d6cc6" stroke-width="0.7"/><path d="M591.8,76.30000000000001l4.2,3.8" stroke="#8e96a6" stroke-width="1.7" stroke-linecap="round"/><circle cx="588.9" cy="73.4" r="3.9" fill="#e3e8fb" stroke="#8b9be6" stroke-width="1"/><path d="M586.9,73.4h4" stroke="#4a7ad8" stroke-width="1"/><path d="M588.9,71.4v4" stroke="#4a7ad8" stroke-width="1"/><path d="M608.6,76.30000000000001l4.2,3.8" stroke="#8e96a6" stroke-width="1.7" stroke-linecap="round"/><circle cx="605.7" cy="73.4" r="3.9" fill="#e3e8fb" stroke="#8b9be6" stroke-width="1"/><path d="M603.7,73.4h4" stroke="#4a7ad8" stroke-width="1"/><path d="M603.7,92.3l3,2.9l3,-2.9" fill="none" stroke="#333" stroke-width="0.9"/><rect x="634.9" y="75.6" width="12.6" height="14" rx="1" fill="#fdfefe" stroke="#a3b4e6" stroke-width="1"/><path d="M636.6,79.6l1,1l1.6,-2M636.6,83l1,1l1.6,-2M636.6,86.4l1,1l1.6,-2" stroke="#2fa03a" stroke-width="0.8" fill="none"/><path d="M647.4,75.2l1.9,1.7l-7,8.9l-2.8,1.5l0.7,-3z" fill="#f6c832" stroke="#c8901a" stroke-width="0.5"/><path d="M647.4,75.2l1.9,1.7l-1,1.3l-1.9,-1.7z" fill="#ee5a6a"/><path d="M639.5,87.3l0.4,-1.7l1.3,1z" fill="#222"/><rect x="660" y="75.3" width="12.4" height="12.2" rx="1.2" fill="url(#gxl)" stroke="#3f9a44" stroke-width="0.7"/><rect x="661.6" y="77.6" width="9" height="7.8" fill="#f1f9f1"/><path d="M662.8,78.8l3.4,4M666.2,78.8l-3.4,4" stroke="#3f9a44" stroke-width="1"/><path d="M667.4,79.6h2.6M667.4,81.4h2.6M662.4,84.2h7" stroke="#7cc07e" stroke-width="0.7"/><path d="M671.6,76.4c2,-0.6 3.6,0.2 4.4,1.8l1.6,-0.6l-1,4.2l-3.8,-2.2l1.5,-0.6c-0.6,-0.9 -1.5,-1.3 -2.7,-1z" fill="#2f9a40" stroke="#1f7f30" stroke-width="0.3"/><rect x="667.6" y="80.8" width="8" height="8" rx="0.6" fill="#56b2dc" stroke="#6f7f8f" stroke-width="0.5"/><path d="M668.4,81.6h6.4l-6.4,4z" fill="#bfe6f6" opacity="0.8"/><text x="687.3" y="86.8" font-family="Liberation Serif, serif" font-size="15.4" font-weight="700" fill="#111">Σ</text><text x="697.4" y="86.6" font-family="Liberation Serif, serif" font-size="13.5" font-style="italic" fill="#111">f</text><text x="702.2" y="87.8" font-family="Liberation Serif, serif" font-size="6.8" font-style="italic" fill="#111">x</text><rect x="759.4" y="69" width="28" height="29.4" rx="1.4" fill="#fdfdfd" stroke="#8c8c8c" stroke-width="1.3"/><rect x="760" y="69.6" width="26.8" height="4" fill="#a9a9a9"/><rect x="777.4" y="70.4" width="2.2" height="2.2" fill="#fff"/><rect x="780.8" y="70.4" width="2.2" height="2.2" fill="#fff"/><rect x="784" y="70.4" width="2.2" height="2.2" fill="#e01c1c"/><rect x="761.4" y="75.4" width="24" height="5.4" fill="#f2f2f2" stroke="#b8b8b8" stroke-width="0.5"/><path d="M763.2,79.6l2.8,-3.2" stroke="#d8801a" stroke-width="1.2"/><ellipse cx="771.2" cy="78" rx="1.9" ry="1.5" fill="#1faa3a"/><rect x="775.6" y="76.2" width="3.2" height="1.9" fill="#7a3ae0"/><rect x="775.6" y="78.2" width="3.2" height="1.6" fill="#e0262a"/><rect x="780.2" y="76.2" width="3" height="1.8" fill="#2a9a8a"/><rect x="780.2" y="78.4" width="3" height="1.4" fill="#555"/><rect x="762" y="82.6" width="22.8" height="1.7" fill="#a9a9a9"/><rect x="762" y="94.6" width="22.8" height="1.7" fill="#a9a9a9"/><rect x="762.2" y="86.6" width="1.1" height="2.6" fill="#111"/><rect x="762.2" y="90" width="1.1" height="2.8" fill="#111"/><rect x="764" y="86.6" width="0.8" height="2.6" fill="#111"/><rect x="764" y="90" width="0.8" height="2.8" fill="#111"/><rect x="765.6" y="86.6" width="1.3" height="2.6" fill="#111"/><rect x="765.6" y="90" width="1.3" height="2.8" fill="#111"/><rect x="771" y="88.2" width="0.9" height="5" fill="#333"/><rect x="772.6" y="88.2" width="1.3" height="5" fill="#333"/><rect x="774.6" y="88.2" width="0.7" height="5" fill="#333"/><rect x="776" y="88.2" width="1.2" height="5" fill="#333"/><rect x="777.9" y="88.2" width="0.8" height="5" fill="#333"/><rect x="779.4" y="88.2" width="1.3" height="5" fill="#333"/><rect x="781.4" y="88.2" width="0.7" height="5" fill="#333"/><rect x="782.8" y="88.2" width="1.1" height="5" fill="#333"/><path d="M790.4,77.4h6.4v-2.4l5.6,4.4l-5.6,4.4v-2.4h-6.4z" fill="url(#gor)"/><path d="M800.6,86.6h-6.4v-2.4l-5.8,4.5l5.8,4.5v-2.4h6.4z" fill="#1fc81f"/><rect x="803.4" y="69" width="28" height="29.6" rx="1.8" fill="#e6eefb" stroke="#1b6fd8" stroke-width="1.5"/><rect x="804" y="69.6" width="26.8" height="4" fill="#2a7be0"/><rect x="821.4" y="70.4" width="2.2" height="2.2" fill="#fff"/><rect x="824.8" y="70.4" width="2.2" height="2.2" fill="#fff"/><rect x="828" y="70.4" width="2.2" height="2.2" fill="#e01c1c"/><rect x="806" y="75.6" width="22.8" height="5.4" fill="#fff" stroke="#5a6a88" stroke-width="0.6"/><text x="809.2" y="80.2" font-family="Liberation Sans, sans-serif" font-size="5.2" font-weight="700" fill="#111">123567</text><rect x="806.4" y="84" width="3.4" height="3.4" fill="#fff" stroke="#222" stroke-width="0.9"/><rect x="812" y="84" width="3.4" height="3.4" fill="#3fc03f" stroke="#222" stroke-width="0.9"/><rect x="807.6" y="90" width="1.2" height="6" fill="#111"/><rect x="809.6" y="90" width="0.8" height="6" fill="#111"/><rect x="811.2" y="90" width="1.5" height="6" fill="#111"/><rect x="813.6" y="90" width="0.8" height="6" fill="#111"/><rect x="815.2" y="90" width="1.3" height="6" fill="#111"/><rect x="817.4" y="90" width="0.8" height="6" fill="#111"/><rect x="819" y="90" width="1.5" height="6" fill="#111"/><rect x="821.4" y="90" width="0.8" height="6" fill="#111"/><rect x="823" y="90" width="1.3" height="6" fill="#111"/><rect x="825.2" y="90" width="0.8" height="6" fill="#111"/><rect x="826.6" y="90" width="1.3" height="6" fill="#111"/><polygon points="5.31,2.91 7.67,5.37 10.99,5.28 9.49,8.40 10.60,11.69 7.32,11.15 4.68,13.27 4.15,9.83 1.41,7.85 4.37,6.26" fill="#f6b02a" stroke="#f8d070" stroke-width="0.5"/><path d="M4.6,7.4l3.6,-1.4l1.2,4.2l-3.8,1.2z" fill="#5868c8"/><path d="M5.4,8.4l2.4,-0.8" stroke="#c8d8f8" stroke-width="0.7"/><circle cx="10.3" cy="3.9" r="0.8" fill="#d07a2a"/><circle cx="6" cy="12.8" r="0.7" fill="#d83a3a"/><path d="M811.6,8.2h6.6" stroke="#222" stroke-width="1"/><rect x="841" y="5.8" width="5.2" height="5.2" fill="#fff" stroke="#222" stroke-width="0.9"/><path d="M842.6,5.6v-1.4h5.2v5.2h-1.6" fill="none" stroke="#222" stroke-width="0.9"/><path d="M870.6,4.2l6.8,6.8M877.4,4.2l-6.8,6.8" stroke="#222" stroke-width="1.1"/><rect x="92.6" y="486.6" width="8.6" height="10" fill="#2b479c"/><text x="95.6" y="496.2" font-family="Liberation Sans, sans-serif" font-size="9.5" font-weight="700" fill="#fff">f</text><rect x="179.6" y="486.6" width="9" height="10" fill="#d2362c"/><text x="180.4" y="494.6" font-family="Liberation Sans, sans-serif" font-size="7" font-weight="700" fill="#fff">g</text><text x="184.4" y="492.4" font-family="Liberation Sans, sans-serif" font-size="5.6" font-weight="700" fill="#fff">+</text></svg>
<span class="t " style="left:15.20px;top:5px;font-size:8.9px;line-height:8.9px;letter-spacing:0.000px;transform:scaleX(0.8593);-webkit-text-stroke:0.15px #000;">DRPU Barcode Label Maker - Corporate Edition (Demo) ( Document1 - 1.dbs )</span>
<span class="t " style="left:10.70px;top:21px;font-size:8.1px;line-height:8.1px;letter-spacing:0.000px;transform:scaleX(0.9158);color:#101a40;-webkit-text-stroke:0.22px #101a40;">File</span>
<span class="t " style="left:35.60px;top:21px;font-size:8.1px;line-height:8.1px;letter-spacing:0.000px;transform:scaleX(0.9941);color:#101a40;-webkit-text-stroke:0.22px #101a40;">Export</span>
<span class="t " style="left:71.80px;top:21px;font-size:8.1px;line-height:8.1px;letter-spacing:0.000px;transform:scaleX(0.9706);color:#101a40;-webkit-text-stroke:0.22px #101a40;">Mail</span>
<span class="t " style="left:98.60px;top:21px;font-size:8.1px;line-height:8.1px;letter-spacing:0.000px;transform:scaleX(0.9774);color:#101a40;-webkit-text-stroke:0.22px #101a40;">Print</span>
<span class="t " style="left:128.50px;top:21px;font-size:8.1px;line-height:8.1px;letter-spacing:0.000px;transform:scaleX(1.0083);color:#101a40;-webkit-text-stroke:0.22px #101a40;">Batch Processing</span>
<span class="t " style="left:203.50px;top:21px;font-size:8.1px;line-height:8.1px;letter-spacing:0.000px;transform:scaleX(0.9935);color:#101a40;-webkit-text-stroke:0.22px #101a40;">Themes</span>
<span class="t " style="left:245.50px;top:21px;font-size:8.1px;line-height:8.1px;letter-spacing:0.000px;transform:scaleX(0.9624);color:#101a40;-webkit-text-stroke:0.22px #101a40;">Help</span>
<span class="t " style="left:274.50px;top:21px;font-size:8.1px;line-height:8.1px;letter-spacing:0.000px;transform:scaleX(0.9834);color:#101a40;-webkit-text-stroke:0.22px #101a40;">Buy Now</span>
<span class="t " style="left:36.30px;top:40px;font-size:9.2px;line-height:9.2px;letter-spacing:0.000px;transform:scaleX(0.9278);color:#101a40;-webkit-text-stroke:0.2px #101a40;">Quick Barcode Mode</span>
<span class="t " style="left:138.30px;top:40px;font-size:9.2px;line-height:9.2px;letter-spacing:0.000px;transform:scaleX(0.9307);color:#101a40;-webkit-text-stroke:0.2px #101a40;">Barcode Designing view Mode</span>
<span class="t " style="left:108.60px;top:57px;font-size:8.3px;line-height:8.3px;letter-spacing:0.000px;transform:scaleX(1.0163);color:#141432;-webkit-text-stroke:0.22px #141432;">Standard Tools</span>
<span class="t " style="left:313.50px;top:57px;font-size:8.3px;line-height:8.3px;letter-spacing:0.000px;transform:scaleX(1.0104);color:#141432;-webkit-text-stroke:0.22px #141432;">Drawing Tools</span>
<span class="t " style="left:456.10px;top:57px;font-size:8.3px;line-height:8.3px;letter-spacing:0.000px;transform:scaleX(0.9539);color:#141432;-webkit-text-stroke:0.22px #141432;">Shapes</span>
<span class="t " style="left:564.50px;top:57px;font-size:8.3px;line-height:8.3px;letter-spacing:0.000px;transform:scaleX(0.9955);color:#141432;-webkit-text-stroke:0.22px #141432;">Zoom</span>
<span class="t " style="left:638.50px;top:57px;font-size:8.3px;line-height:8.3px;letter-spacing:0.000px;transform:scaleX(0.9731);color:#141432;-webkit-text-stroke:0.22px #141432;">Batch Processing</span>
<span class="t " style="left:736.20px;top:57px;font-size:8.3px;line-height:8.3px;letter-spacing:0.000px;transform:scaleX(0.9866);color:#141432;-webkit-text-stroke:0.22px #141432;">Switch to Quick Barcode Mode</span>
<span class="t " style="left:544.90px;top:89px;font-size:8.4px;line-height:8.4px;letter-spacing:0.000px;transform:scaleX(0.9193);-webkit-text-stroke:0.2px #000;">200%</span>
<span class="t " style="left:135.46px;top:184px;font-size:17px;line-height:17px;letter-spacing:0.000px;transform:scaleX(1.0383);-webkit-text-stroke:0.2px #000;">Boss KP</span>
<span class="t " style="left:234.39px;top:185px;font-size:14px;line-height:14px;letter-spacing:0.000px;transform:scaleX(1.0127);-webkit-text-stroke:0.2px #000;">Designer Styles 12</span>
<span class="t " style="left:368.58px;top:185px;font-size:14px;line-height:14px;letter-spacing:0.000px;transform:scaleX(1.0214);-webkit-text-stroke:0.2px #000;">D-756453</span>
<span class="t " style="left:443.58px;top:185px;font-size:14px;line-height:14px;letter-spacing:0.000px;transform:scaleX(1.0186);-webkit-text-stroke:0.2px #000;">Imported Quality</span>
<span class="t " style="left:138.90px;top:213px;font-size:16.5px;line-height:16.5px;letter-spacing:0.000px;transform:scaleX(1.0644);-webkit-text-stroke:0.2px #000;">Art / Apt.</span>
<span class="t " style="left:223.30px;top:212px;font-size:19.5px;line-height:19.5px;letter-spacing:0.000px;transform:scaleX(1.0342);-webkit-text-stroke:0.2px #000;">502310025</span>
<span class="t " style="left:362.00px;top:212px;font-size:19.5px;line-height:19.5px;letter-spacing:0.000px;transform:scaleX(1.0309);-webkit-text-stroke:0.2px #000;">00101254</span>
<span class="t " style="left:478.80px;top:212px;font-size:19.5px;line-height:19.5px;letter-spacing:0.000px;transform:scaleX(1.0074);-webkit-text-stroke:0.2px #000;">01</span>
<span class="t " style="left:522.60px;top:212px;font-size:19.5px;line-height:19.5px;letter-spacing:0.000px;transform:scaleX(1.0266);-webkit-text-stroke:0.2px #000;">23</span>
<span class="t " style="left:143.00px;top:254px;font-size:16px;line-height:16px;letter-spacing:0.000px;transform:scaleX(1.0396);font-family:'Liberation Serif', serif;">DEMO</span>
<span class="t " style="left:154.20px;top:331px;font-size:16.3px;line-height:16.3px;letter-spacing:0.000px;transform:scaleX(0.9889);-webkit-text-stroke:0.55px #000;">2</span>
<span class="t " style="left:203.82px;top:331px;font-size:16.3px;line-height:16.3px;letter-spacing:0.529px;transform:scaleX(0.9800);-webkit-text-stroke:0.6px #000;">121231</span>
<span class="t " style="left:327.10px;top:331px;font-size:16.3px;line-height:16.3px;letter-spacing:0.594px;transform:scaleX(0.9800);-webkit-text-stroke:0.6px #000;">222356</span>
<span class="t " style="left:133.02px;top:380px;font-size:20.6px;line-height:20.6px;letter-spacing:0.000px;transform:scaleX(0.9756);-webkit-text-stroke:0.2px #000;">INT</span>
<span class="t " style="left:138.39px;top:405px;font-size:20.6px;line-height:20.6px;letter-spacing:0.000px;transform:scaleX(1.0067);-webkit-text-stroke:0.2px #000;">M</span>
<span class="t " style="left:224.22px;top:380px;font-size:20.6px;line-height:20.6px;letter-spacing:0.000px;transform:scaleX(0.9816);-webkit-text-stroke:0.2px #000;">MX</span>
<span class="t " style="left:230.91px;top:405px;font-size:20.6px;line-height:20.6px;letter-spacing:0.000px;transform:scaleX(0.9867);-webkit-text-stroke:0.2px #000;">M</span>
<span class="t " style="left:313.60px;top:380px;font-size:20.6px;line-height:20.6px;letter-spacing:0.000px;transform:scaleX(1.0099);-webkit-text-stroke:0.2px #000;">VE</span>
<span class="t " style="left:316.36px;top:405px;font-size:20.6px;line-height:20.6px;letter-spacing:0.000px;transform:scaleX(1.0400);-webkit-text-stroke:0.2px #000;">M</span>
<span class="t " style="left:395.40px;top:380px;font-size:17.3px;line-height:17.3px;letter-spacing:1.015px;transform:scaleX(0.9800);-webkit-text-stroke:0.6px #000;">6500125</span>
<span class="t " style="left:370.80px;top:405px;font-size:17.3px;line-height:17.3px;letter-spacing:0.941px;transform:scaleX(0.9800);-webkit-text-stroke:0.6px #000;">0012541 014</span>
<span class="t " style="left:506.80px;top:336px;font-size:16px;line-height:16px;letter-spacing:0.000px;transform:scaleX(1.0418);font-family:'Liberation Serif', serif;">DEMO</span>
<span class="t " style="left:736.90px;top:123px;font-size:11.8px;line-height:11.8px;letter-spacing:0.000px;transform:scaleX(0.9774);color:#151515;clip-path:inset(2px 0 0 0);-webkit-text-stroke:0.15px #151515;">Barcode Properties</span>
<span class="t " style="left:696.00px;top:303px;font-size:11px;line-height:11px;letter-spacing:-0.127px;transform:scaleX(1.0000);font-weight:700;">Please double-click on</span>
<span class="t " style="left:696.00px;top:315px;font-size:11px;line-height:11px;letter-spacing:0.054px;transform:scaleX(1.0000);font-weight:700;">Barcode to work on its properties.</span>
<span class="t " style="left:757.60px;top:337px;font-size:8.3px;line-height:8.3px;letter-spacing:0.000px;transform:scaleX(1.0068);color:#111;-webkit-text-stroke:0.15px #111;">View Properties</span>
<span class="t " style="left:145.90px;top:126px;font-size:7.4px;line-height:7.4px;letter-spacing:0.000px;transform:scaleX(1.0000);font-weight:700;color:#222;">1</span>
<span class="t " style="left:193.52px;top:126px;font-size:7.4px;line-height:7.4px;letter-spacing:0.000px;transform:scaleX(1.0000);font-weight:700;color:#222;">2</span>
<span class="t " style="left:241.14px;top:126px;font-size:7.4px;line-height:7.4px;letter-spacing:0.000px;transform:scaleX(1.0000);font-weight:700;color:#222;">3</span>
<span class="t " style="left:288.76px;top:126px;font-size:7.4px;line-height:7.4px;letter-spacing:0.000px;transform:scaleX(1.0000);font-weight:700;color:#222;">4</span>
<span class="t " style="left:336.38px;top:126px;font-size:7.4px;line-height:7.4px;letter-spacing:0.000px;transform:scaleX(1.0000);font-weight:700;color:#222;">5</span>
<span class="t " style="left:384.00px;top:126px;font-size:7.4px;line-height:7.4px;letter-spacing:0.000px;transform:scaleX(1.0000);font-weight:700;color:#222;">6</span>
<span class="t " style="left:431.62px;top:126px;font-size:7.4px;line-height:7.4px;letter-spacing:0.000px;transform:scaleX(1.0000);font-weight:700;color:#222;">7</span>
<span class="t " style="left:479.24px;top:126px;font-size:7.4px;line-height:7.4px;letter-spacing:0.000px;transform:scaleX(1.0000);font-weight:700;color:#222;">8</span>
<span class="t " style="left:526.86px;top:126px;font-size:7.4px;line-height:7.4px;letter-spacing:0.000px;transform:scaleX(1.0000);font-weight:700;color:#222;">9</span>
<span class="t " style="left:568.98px;top:126px;font-size:7.4px;line-height:7.4px;letter-spacing:0.390px;transform:scaleX(1.0000);font-weight:700;color:#222;">10</span>
<span class="t " style="left:5.80px;top:204px;font-size:7.4px;line-height:7.4px;letter-spacing:0.000px;transform:scaleX(1.0000);font-weight:700;color:#222;">1</span>
<span class="t " style="left:5.80px;top:254px;font-size:7.4px;line-height:7.4px;letter-spacing:0.000px;transform:scaleX(1.0000);font-weight:700;color:#222;">2</span>
<span class="t " style="left:5.80px;top:303px;font-size:7.4px;line-height:7.4px;letter-spacing:0.000px;transform:scaleX(1.0000);font-weight:700;color:#222;">3</span>
<span class="t " style="left:5.80px;top:353px;font-size:7.4px;line-height:7.4px;letter-spacing:0.000px;transform:scaleX(1.0000);font-weight:700;color:#222;">4</span>
<span class="t " style="left:5.80px;top:403px;font-size:7.4px;line-height:7.4px;letter-spacing:0.000px;transform:scaleX(1.0000);font-weight:700;color:#222;">5</span>
<span class="t " style="left:119.50px;top:487px;font-size:6.6px;line-height:6.6px;letter-spacing:0.818px;transform:scaleX(1.0000);font-weight:700;font-family:'Liberation Mono', monospace;color:#1a2a9a;-webkit-text-stroke:0.25px #1a2a9a;">SHARE IT,</span>
<span class="t " style="left:107.70px;top:493px;font-size:6.6px;line-height:6.6px;letter-spacing:0.279px;transform:scaleX(1.0000);font-weight:700;font-family:'Liberation Mono', monospace;color:#d81a1a;-webkit-text-stroke:0.25px #d81a1a;">AND GET IT FREE</span>
</body></html>
